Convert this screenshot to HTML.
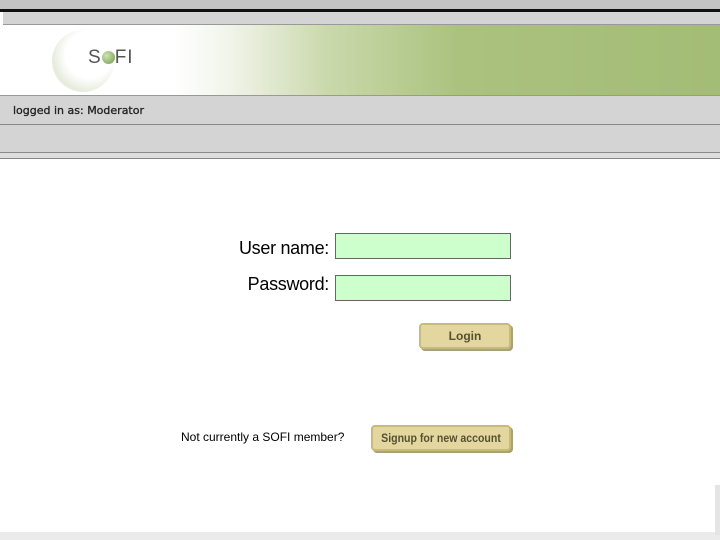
<!DOCTYPE html><html><head><style>
body{margin:0;width:720px;height:540px;overflow:hidden;background:#fff;font-family:"Liberation Sans",sans-serif;position:relative}
div{position:absolute}
.btn{background:#e3d79f;border:2px solid #c8bb7a;border-radius:4px;box-shadow:2px 2px 0 #a9a17a;font-weight:bold;font-size:12px;color:#555030;text-align:center;box-sizing:border-box;white-space:nowrap}
.inp{background:#ccffcc;border:1px solid #666;box-sizing:border-box}
</style></head><body>
<div style="left:0;top:0;width:720px;height:9px;background:#c4c4c4"></div>
<div style="left:0;top:9px;width:720px;height:3px;background:#111"></div>
<div style="left:3px;top:12px;width:717px;height:12px;background:#d4d4d4;border-bottom:1px solid #999"></div>
<div style="left:0;top:25px;width:720px;height:70px;background:linear-gradient(90deg,#fff 0,#fff 175px,#f1f4ea 230px,#c9d8aa 330px,#aac27e 460px,#a3bc76 720px)"></div>
<div style="left:52px;top:30px;width:62px;height:62px;border-radius:50%;background:radial-gradient(circle at 60% 40%,#fff 45%,#e6ecdc 70%,#fafbf7 100%)"></div>
<div style="left:88px;top:47px;font-size:19px;color:#555;letter-spacing:1px">S<span style="display:inline-block;width:13px;height:13px;border-radius:50%;background:radial-gradient(circle at 35% 35%,#cde3b0,#6f9a50);vertical-align:-1px"></span>FI</div>
<div style="left:0;top:95px;width:720px;height:28px;background:#d4d4d4;border-top:1px solid #999;border-bottom:1px solid #888"></div>
<div style="left:13px;top:104px;font-family:'DejaVu Sans',sans-serif;font-size:11px;color:#222;-webkit-text-stroke:0.3px #222">logged in as: Moderator</div>
<div style="left:0;top:125px;width:720px;height:27px;background:#d4d4d4;border-bottom:1px solid #888"></div>
<div style="left:0;top:153px;width:720px;height:5px;background:#ddd;border-bottom:1px solid #888"></div>
<div style="left:0;top:532px;width:720px;height:8px;background:#ebebeb"></div>
<div style="left:715px;top:485px;width:5px;height:50px;background:#e5e5e5"></div>
<div style="left:190px;top:238px;width:139px;text-align:right;font-size:18px;color:#000;letter-spacing:-0.3px">User name:</div>
<div style="left:190px;top:274px;width:139px;text-align:right;font-size:18px;color:#000;letter-spacing:-0.3px">Password:</div>
<div class="inp" style="left:335px;top:233px;width:176px;height:26px"></div>
<div class="inp" style="left:335px;top:275px;width:176px;height:26px"></div>
<div class="btn" style="left:419px;top:323px;width:92px;height:26px;line-height:22px">Login</div>
<div style="left:181px;top:430px;font-size:12px;color:#000">Not currently a SOFI member?</div>
<div class="btn" style="left:371px;top:425px;width:140px;height:26px;line-height:22px"><span style="display:inline-block;transform:scaleX(0.88)">Signup for new account</span></div>
</body></html>
